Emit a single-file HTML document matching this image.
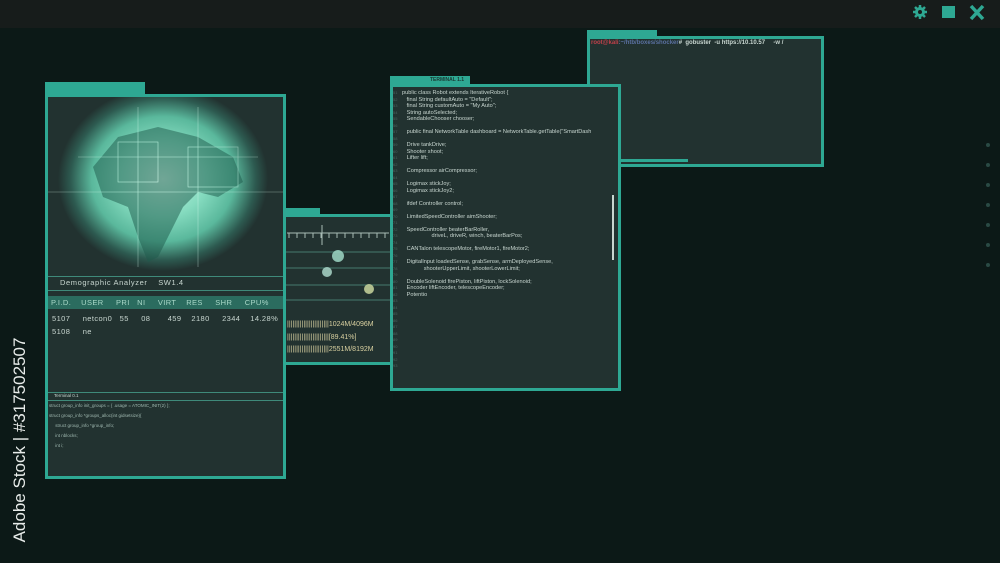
<!DOCTYPE html>
<html><head><style>
*{margin:0;padding:0;box-sizing:border-box}
body{width:1000px;height:563px;background:#0c1917;position:relative;overflow:hidden;font-family:"Liberation Sans",sans-serif}
.top{position:absolute;left:0;top:0;width:1000px;height:28px;background:#171c1b}
.win{position:absolute;background:#223230;border:3px solid #2ea893}
.tab{position:absolute;background:#2ea893}
.t{position:absolute;white-space:pre;color:#c8d6d0}
</style></head><body>
<div class="top"></div>
<svg style="position:absolute;left:910px;top:4px" width="80" height="18">
<g fill="#2ea893">
<g stroke="#2ea893" stroke-width="2.5"><line x1="10" y1="1" x2="10" y2="15"/><line x1="3" y1="8" x2="17" y2="8"/><line x1="5" y1="3" x2="15" y2="13"/><line x1="15" y1="3" x2="5" y2="13"/></g>
<circle cx="10" cy="8" r="5"/>
<circle cx="10" cy="8" r="2" fill="#171c1b"/>
<rect x="32" y="2" width="13" height="12"/></g>
<path d="M61 2 L73 15 M73 2 L61 15" stroke="#2ea893" stroke-width="3.5"/>
</svg>

<!-- window 4 -->
<div class="tab" style="left:587px;top:30px;width:70px;height:9px"></div>
<div class="win" style="left:587px;top:36px;width:237px;height:131px"></div>
<div class="t" style="left:591px;top:40px;font-size:6px;font-weight:bold"><span style="color:#c0404a">root@kali</span><span style="color:#5a70a0">:~/htb/boxes/shocker</span>#  gobuster  -u https://10.10.57     -w /</div>
<div style="position:absolute;left:620px;top:159px;width:68px;height:3px;background:#2ea893"></div>

<!-- window 2 -->
<div class="tab" style="left:284px;top:208px;width:36px;height:9px"></div>
<div class="win" style="left:282px;top:214px;width:112px;height:151px"></div>
<svg style="position:absolute;left:285px;top:217px" width="106" height="145">
<g stroke="#a8bcb5" stroke-width="1"><line x1="2" y1="16" x2="104" y2="16"/>
<path d="M4 16v5M12 16v5M20 16v5M28 16v5M36 16v5M44 16v5M52 16v5M60 16v5M68 16v5M76 16v5M84 16v5M92 16v5M100 16v5M37 8v20"/></g>
<g stroke="#3f6b62" stroke-width="1.3"><line x1="0" y1="35" x2="106" y2="35"/><line x1="0" y1="51" x2="106" y2="51"/><line x1="0" y1="68" x2="106" y2="68"/><line x1="0" y1="83" x2="106" y2="83"/></g>
<circle cx="53" cy="39" r="6" fill="#9ed8c5" opacity=".85"/>
<circle cx="42" cy="55" r="5" fill="#a9d6c8" opacity=".85"/>
<circle cx="84" cy="72" r="5" fill="#c9d69e" opacity=".85"/>
</svg>
<div class="t" style="left:287px;top:319px;font-size:7px;line-height:12.5px;color:#d8d0a0">|||||||||||||||||||||||1024M/4096M
|||||||||||||||||||||||[89.41%]
|||||||||||||||||||||||2551M/8192M</div>

<!-- window 1 -->
<div class="tab" style="left:45px;top:82px;width:100px;height:15px"></div>
<div class="win" style="left:45px;top:94px;width:241px;height:385px"></div>
<div style="position:absolute;left:48px;top:97px;width:235px;height:179px;background:radial-gradient(ellipse 105px 92px at 115px 82px,#c4f4e2 0%,#86dcc0 40%,#5ab89c 68%,#2d5a50 88%,#223230 100%)"></div>
<svg style="position:absolute;left:48px;top:97px" width="235" height="179" opacity=".5">
<path d="M45 70 L70 40 L110 30 L150 40 L185 60 L195 85 L170 100 L150 95 L135 110 L125 130 L110 160 L100 165 L90 140 L80 110 L55 100 Z" fill="#1f5a4c"/>
<g stroke="#e0fff4" stroke-width=".6" fill="none"><rect x="70" y="45" width="40" height="40"/><rect x="140" y="50" width="50" height="40"/><path d="M0 95H235M90 10V170M150 10V170M30 60H210"/></g>
</svg>
<div style="position:absolute;left:48px;top:276px;width:235px;height:1px;background:#3f8a7a"></div>
<div class="t" style="left:60px;top:278px;font-size:7.5px;letter-spacing:.6px">Demographic Analyzer    SW1.4</div>
<div style="position:absolute;left:48px;top:290px;width:235px;height:1px;background:#3f8a7a"></div>
<div style="position:absolute;left:48px;top:296px;width:235px;height:13px;background:#2b6c5f"></div>
<div class="t" style="left:51px;top:298px;font-size:7.5px;color:#a8d8c8;letter-spacing:.4px">P.I.D.    USER     PRI   NI     VIRT    RES     SHR     CPU%</div>
<div class="t" style="left:52px;top:312px;font-size:7.5px;line-height:13px;letter-spacing:.4px">5107     netcon0   55     08       459    2180     2344    14.28%
5108     ne</div>
<div style="position:absolute;left:48px;top:392px;width:235px;height:1px;background:#3f8a7a"></div>
<div class="t" style="left:54px;top:393px;font-size:4.5px">Terminal 0.1</div>
<div style="position:absolute;left:48px;top:400px;width:235px;height:1px;background:#3f8a7a"></div>
<div class="t" style="left:49px;top:401px;font-size:4.5px;line-height:10px;color:#9fb8b0">struct group_info init_groups = { .usage = ATOMIC_INIT(2) };
struct group_info *groups_alloc(int gidsetsize){
     struct group_info *group_info;
     int nblocks;
     int i;</div>

<!-- window 3 -->
<div class="tab" style="left:390px;top:76px;width:80px;height:10px"></div>
<div class="t" style="left:430px;top:77px;font-size:5px;font-weight:bold;color:#1b3a34">TERMINAL 1.1</div>
<div class="win" style="left:390px;top:84px;width:231px;height:307px"></div>
<div style="position:absolute;left:612px;top:195px;width:2px;height:65px;background:#c8d6d0"></div>
<div class="t" style="left:393px;top:90px;font-size:4px;line-height:6.5px;color:#4a6660">51
52
53
54
55
56
57
58
59
60
61
62
63
64
65
66
67
68
69
70
71
72
73
74
75
76
77
78
79
80
81
82
83
84
85
86
87
88
89
90
91
92
93</div>
<div class="t" style="left:402px;top:90px;font-size:5.6px;line-height:6.5px">public class Robot extends IterativeRobot {
   final String defaultAuto = "Default";
   final String customAuto = "My Auto";
   String autoSelected;
   SendableChooser chooser;

   public final NetworkTable dashboard = NetworkTable.getTable("SmartDash

   Drive tankDrive;
   Shooter shoot;
   Lifter lift;

   Compressor airCompressor;

   Logimax stickJoy;
   Logimax stickJoy2;

   ifdef Controller control;

   LimitedSpeedController aimShooter;

   SpeedController beaterBarRoller,
                   driveL, driveR, winch, beaterBarPos;

   CANTalon telescopeMotor, fireMotor1, fireMotor2;

   DigitalInput loadedSense, grabSense, armDeployedSense,
              shooterUpperLimit, shooterLowerLimit;

   DoubleSolenoid firePiston, liftPiston, lockSolenoid;
   Encoder liftEncoder, telescopeEncoder;
   Potentio</div>

<!-- right dots -->
<svg style="position:absolute;left:982px;top:120px" width="12" height="170"><g fill="#2a4a44"><circle cx="6" cy="25" r="2"/><circle cx="6" cy="45" r="2"/><circle cx="6" cy="65" r="2"/><circle cx="6" cy="85" r="2"/><circle cx="6" cy="105" r="2"/><circle cx="6" cy="125" r="2"/><circle cx="6" cy="145" r="2"/></g></svg>

<div class="t" style="left:-95px;top:430px;width:230px;transform:rotate(-90deg);font-size:17px;color:#e8ecea;text-align:center">Adobe Stock | #317502507</div>
</body></html>
